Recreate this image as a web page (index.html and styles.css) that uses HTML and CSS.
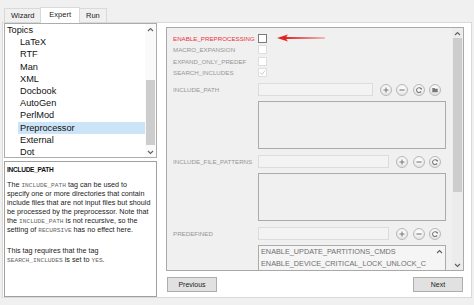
FILE: index.html
```html
<!DOCTYPE html>
<html lang="en">
<head>
    <meta charset="UTF-8">
    <title>Doxywizard - Expert</title>
    <link rel="stylesheet" href="styles.css">
</head>
<body>
    <div class="window">
        <div class="tabs">
            <div class="tab">Wizard</div>
            <div class="tab active">Expert</div>
            <div class="tab">Run</div>
        </div>

        <div class="page">
            <div class="left">
                <div class="topics">
                    <ul class="tree">
                        <li class="root">Topics</li>
                        <li>LaTeX</li>
                        <li>RTF</li>
                        <li>Man</li>
                        <li>XML</li>
                        <li>Docbook</li>
                        <li>AutoGen</li>
                        <li>PerlMod</li>
                        <li class="selected">Preprocessor</li>
                        <li>External</li>
                        <li>Dot</li>
                    </ul>
                    <div class="vscroll light">
                        <div class="arrow"><svg width="7" height="5" viewBox="0 0 7 5"><polyline points="1,4 3.5,1.5 6,4" /></svg></div>
                        <div class="track"><div class="thumb topics-thumb"></div></div>
                        <div class="arrow"><svg width="7" height="5" viewBox="0 0 7 5"><polyline points="1,1 3.5,3.5 6,1" /></svg></div>
                    </div>
                </div>

                <div class="help">
                    <div class="help-title">INCLUDE_PATH</div>
                    <p>The <code>INCLUDE_PATH</code> tag can be used to<br>
                    specify one or more directories that contain<br>
                    include files that are not input files but should<br>
                    be processed by the preprocessor. Note that<br>
                    the <code>INCLUDE_PATH</code> is not recursive, so the<br>
                    setting of <code>RECURSIVE</code> has no effect here.</p>
                    <p>This tag requires that the tag<br>
                    <code>SEARCH_INCLUDES</code> is set to <code>YES</code>.</p>
                </div>
            </div>

            <div class="right">
                <div class="frame">
                    <div class="settings">
                        <div class="row check">
                            <span class="lbl changed">ENABLE_PREPROCESSING</span>
                            <span class="cb active"></span>
                        </div>
                        <div class="row check">
                            <span class="lbl">MACRO_EXPANSION</span>
                            <span class="cb"></span>
                        </div>
                        <div class="row check">
                            <span class="lbl">EXPAND_ONLY_PREDEF</span>
                            <span class="cb"></span>
                        </div>
                        <div class="row check">
                            <span class="lbl">SEARCH_INCLUDES</span>
                            <span class="cb"><svg width="7" height="7" viewBox="0 0 7 7"><polyline points="1,3.5 3,5.5 6,1.5" /></svg></span>
                        </div>

                        <div class="row field">
                            <span class="lbl">INCLUDE_PATH</span>
                            <div class="controls">
                                <span class="input"></span>
                                <div class="rbtns">
                                    <span class="rbtn"><svg width="8" height="8" viewBox="0 0 8 8"><path d="M4 1.5v5M1.5 4h5" /></svg></span>
                                    <span class="rbtn"><svg width="8" height="8" viewBox="0 0 8 8"><path d="M1.5 4h5" /></svg></span>
                                    <span class="rbtn"><svg width="8" height="8" viewBox="0 0 8 8"><path d="M6.2 3.2A2.4 2.4 0 1 0 6 5.4" /><path class="fill" d="M5 1.6l2 .4-.6 2z" /></svg></span>
                                    <span class="rbtn"><svg width="8" height="8" viewBox="0 0 8 8"><path class="fill" d="M1.3 2h2.2l.6.7h2.6v3.6H1.3z" /></svg></span>
                                </div>
                            </div>
                        </div>
                        <div class="box"></div>

                        <div class="row field">
                            <span class="lbl">INCLUDE_FILE_PATTERNS</span>
                            <div class="controls">
                                <span class="input"></span>
                                <div class="rbtns">
                                    <span class="rbtn"><svg width="8" height="8" viewBox="0 0 8 8"><path d="M4 1.5v5M1.5 4h5" /></svg></span>
                                    <span class="rbtn"><svg width="8" height="8" viewBox="0 0 8 8"><path d="M1.5 4h5" /></svg></span>
                                    <span class="rbtn"><svg width="8" height="8" viewBox="0 0 8 8"><path d="M6.2 3.2A2.4 2.4 0 1 0 6 5.4" /><path class="fill" d="M5 1.6l2 .4-.6 2z" /></svg></span>
                                </div>
                            </div>
                        </div>
                        <div class="box"></div>

                        <div class="row field">
                            <span class="lbl">PREDEFINED</span>
                            <div class="controls">
                                <span class="input"></span>
                                <div class="rbtns">
                                    <span class="rbtn"><svg width="8" height="8" viewBox="0 0 8 8"><path d="M4 1.5v5M1.5 4h5" /></svg></span>
                                    <span class="rbtn"><svg width="8" height="8" viewBox="0 0 8 8"><path d="M1.5 4h5" /></svg></span>
                                    <span class="rbtn"><svg width="8" height="8" viewBox="0 0 8 8"><path d="M6.2 3.2A2.4 2.4 0 1 0 6 5.4" /><path class="fill" d="M5 1.6l2 .4-.6 2z" /></svg></span>
                                </div>
                            </div>
                        </div>
                        <div class="row list-row">
                            <span class="lbl"></span>
                            <div class="list">
                                <div class="list-items">
                                    <div>ENABLE_UPDATE_PARTITIONS_CMDS</div>
                                    <div>ENABLE_DEVICE_CRITICAL_LOCK_UNLOCK_C</div>
                                </div>
                                <div class="list-arrow"><svg width="7" height="5" viewBox="0 0 7 5"><polyline points="1,4 3.5,1.5 6,4" /></svg></div>
                            </div>
                        </div>
                    </div>

                    <div class="vscroll">
                        <div class="arrow"><svg width="7" height="5" viewBox="0 0 7 5"><polyline points="1,4 3.5,1.5 6,4" /></svg></div>
                        <div class="track"><div class="thumb frame-thumb"></div></div>
                        <div class="arrow"><svg width="7" height="5" viewBox="0 0 7 5"><polyline points="1,1 3.5,3.5 6,1" /></svg></div>
                    </div>

                    <!-- red annotation arrow pointing at the checkbox -->
                    <svg class="pointer" width="48" height="8" viewBox="0 0 48 8">
                        <polygon points="0,4 11,0.6 8.5,4 11,7.4" />
                        <polygon points="8,3 48,3.7 48,4.3 8,5" />
                    </svg>
                </div>

                <div class="nav">
                    <button class="btn">Previous</button>
                    <button class="btn">Next</button>
                </div>
            </div>
        </div>
    </div>
</body>
</html>
```

FILE: styles.css
```css
body {
    margin: 0;
    width: 474px;
    height: 305px;
    overflow: hidden;
    background-color: #f0f0f0;
    font-family: "Liberation Sans", Arial, sans-serif;
    color: #222;
}

.window {
    padding-top: 7px;
}

/* tab bar */
.tabs {
    display: flex;
    align-items: flex-end;
    height: 15px;
    padding-left: 4px;
}

.tab {
    height: 13px;
    padding: 0 6px;
    border: 1px solid #d9d9d9;
    border-bottom: none;
    background-color: #f0f0f0;
    font-size: 7.5px;
    line-height: 13px;
    margin-right: -1px;
}

.tab.active {
    height: 15px;
    line-height: 14px;
    padding: 0 8px;
    background-color: #fff;
    position: relative;
    margin-bottom: -1px;
    z-index: 1;
}

.page {
    box-sizing: border-box;
    height: 276px;
    margin: 0 2px;
    padding-left: 1px;
    border: 1px solid #d9d9d9;
    background-color: #fff;
    display: flex;
    gap: 9px;
}

/* left column */
.left {
    width: 153px;
    display: flex;
    flex-direction: column;
}

.topics {
    box-sizing: border-box;
    height: 135px;
    border: 1px solid #acacac;
    display: flex;
}

.tree {
    flex: 1;
    list-style: none;
    margin: 0;
    padding: 0 0 0 2px;
    font-size: 9.2px;
    line-height: 12.2px;
    color: #111;
}

.tree li {
    margin-left: 11px;
    padding-left: 2px;
}

.tree li.root {
    margin-left: 0;
    padding-left: 0;
}

.tree li.selected {
    background-color: #cce4f7;
}

.vscroll {
    width: 11px;
    display: flex;
    flex-direction: column;
    background-color: #ececec;
}

.vscroll.light {
    background-color: #fafafa;
}

.arrow {
    height: 10px;
    display: flex;
    align-items: center;
    justify-content: center;
}

.arrow svg, .list-arrow svg {
    fill: none;
    stroke: #606060;
    stroke-width: 1.1;
}

.track {
    flex: 1;
}

.thumb {
    background-color: #cdcdcd;
    margin: 0 1px;
}

.topics-thumb {
    margin-top: 46px;
    height: 65px;
}

.frame-thumb {
    height: 154px;
}

.help {
    box-sizing: border-box;
    height: 136px;
    margin-top: 3px;
    padding: 3px 2px 0 2px;
    border: 1px solid #a0a0a0;
    font-size: 7.2px;
    line-height: 8.75px;
    color: #222;
}

.help-title {
    font-size: 6.6px;
    font-weight: bold;
    letter-spacing: -0.3px;
    line-height: 9px;
    color: #111;
}

.help p {
    margin: 6.5px 0 0;
}

.help p + p {
    margin-top: 11px;
}

.help code {
    font-family: "Liberation Mono", "Courier New", monospace;
    font-size: 6.2px;
    color: #666;
}

/* right column */
.right {
    width: 298px;
    padding-top: 4px;
    display: flex;
    flex-direction: column;
}

.frame {
    position: relative;
    box-sizing: border-box;
    height: 244px;
    border: 1px solid #a9a9a9;
    background-color: #f0f0f0;
    display: flex;
    overflow: hidden;
}

.settings {
    flex: 1;
    padding: 5px 6px 0 6px;
}

.row {
    display: flex;
    align-items: center;
}

.lbl {
    width: 85px;
    flex: none;
    font-size: 6.2px;
    color: #979797;
    white-space: nowrap;
}

.lbl.changed {
    color: #e8323c;
}

.row.check {
    height: 11.3px;
}

.cb {
    box-sizing: border-box;
    width: 9px;
    height: 9px;
    border: 1px solid #dedede;
    background-color: #fff;
    display: flex;
    align-items: center;
    justify-content: center;
}

.cb.active {
    border-color: #7a7a7a;
}

.cb svg {
    fill: none;
    stroke: #c4c4c4;
    stroke-width: 0.9;
}

.row.field {
    height: 13px;
    margin-top: 5px;
}

.row.field + .box + .row.field {
    margin-top: 6px;
}

.controls {
    flex: 1;
    display: flex;
    align-items: center;
    height: 13px;
}

.input {
    flex: 1;
    box-sizing: border-box;
    height: 13px;
    border: 1px solid #dcdcdc;
    background-color: #f3f3f3;
}

.rbtns {
    display: flex;
    gap: 4.5px;
    margin: 0 5px 0 7px;
}

.rbtn {
    box-sizing: border-box;
    width: 12px;
    height: 12px;
    border-radius: 50%;
    border: 1px solid #b9b9b9;
    background: radial-gradient(circle at 50% 35%, #ffffff 0%, #f2f2f2 45%, #d5d5d5 100%);
    display: flex;
    align-items: center;
    justify-content: center;
}

.rbtn svg {
    fill: none;
    stroke: #777;
    stroke-width: 1.1;
}

.rbtn svg .fill {
    fill: #777;
    stroke: none;
}

.box {
    box-sizing: border-box;
    height: 48px;
    margin: 5px 0 0 85px;
    border: 1px solid #ababab;
    background-color: #f0f0f0;
}

.list-row {
    margin-top: 5px;
    align-items: flex-start;
}

.list {
    flex: 1;
    box-sizing: border-box;
    height: 30px;
    border: 1px solid #ababab;
    background-color: #f5f5f5;
    display: flex;
}

.list-items {
    flex: 1;
    padding-left: 2px;
    font-size: 7.3px;
    line-height: 11.5px;
    color: #707070;
    white-space: nowrap;
    overflow: hidden;
}

.list-arrow {
    width: 11px;
    height: 10px;
    display: flex;
    align-items: center;
    justify-content: center;
}

.pointer {
    position: absolute;
    left: 110px;
    top: 6px;
    fill: #e02424;
}

.nav {
    display: flex;
    justify-content: space-between;
    margin-top: 6px;
    padding: 0 1px;
}

.btn {
    width: 50px;
    height: 15px;
    padding: 0;
    border: 1px solid #adadad;
    background-color: #e1e1e1;
    font-family: "Liberation Sans", Arial, sans-serif;
    font-size: 7px;
    color: #222;
}
```
